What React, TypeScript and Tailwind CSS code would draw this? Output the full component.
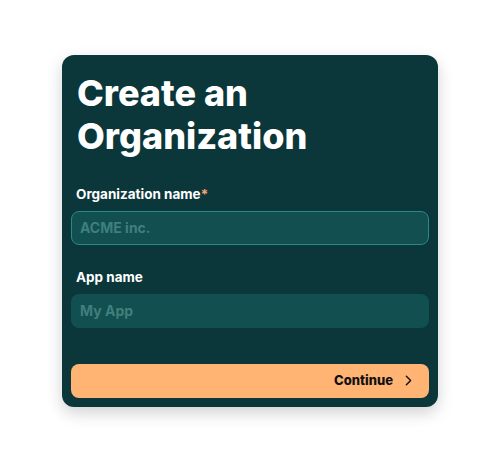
import { ChevronRight } from "lucide-react";

export default function App() {
  return (
    <main
      className="flex min-h-screen items-center justify-center bg-white"
      style={{ fontFamily: "Inter, 'Noto Sans', sans-serif" }}
    >
      <div className="flex w-[376px] flex-col rounded-xl bg-[#0b363a] px-[9px] pb-[9px] pt-[17px] shadow-[0_6px_16px_rgba(0,0,0,0.18)]">
        <h1 className="px-[6px] text-[36px] font-extrabold leading-[43px] text-white">
          Create an
          <br />
          Organization
        </h1>

        <Field label="Organization name" required placeholder="ACME inc." focused className="mt-[27px]" />
        <Field label="App name" placeholder="My App" className="mt-[23px]" />

        <button
          type="button"
          className="mt-[36px] flex h-[34px] w-full items-center justify-end gap-[7px] rounded-lg bg-[#ffb474] pr-[12px] text-[13px] font-extrabold text-[#111]"
        >
          Continue
          <ChevronRight size={17} strokeWidth={2} />
        </button>
      </div>
    </main>
  );
}

function Field({
  label,
  placeholder,
  required,
  focused,
  className = "",
}: {
  label: string;
  placeholder: string;
  required?: boolean;
  focused?: boolean;
  className?: string;
}) {
  return (
    <label className={"block " + className}>
      <span className="block px-[5px] text-[13.5px] font-bold leading-[18px] text-white">
        {label}
        {required && <span className="text-[#f5a37c]">*</span>}
      </span>
      <input
        placeholder={placeholder}
        className={
          "mt-[8px] h-[34px] w-full rounded-lg bg-[#124f50] px-[8px] text-[14px] font-bold text-white outline-none placeholder:text-[#3f7f7c] " +
          (focused ? "border border-[#2a8886]" : "border border-transparent")
        }
      />
    </label>
  );
}
